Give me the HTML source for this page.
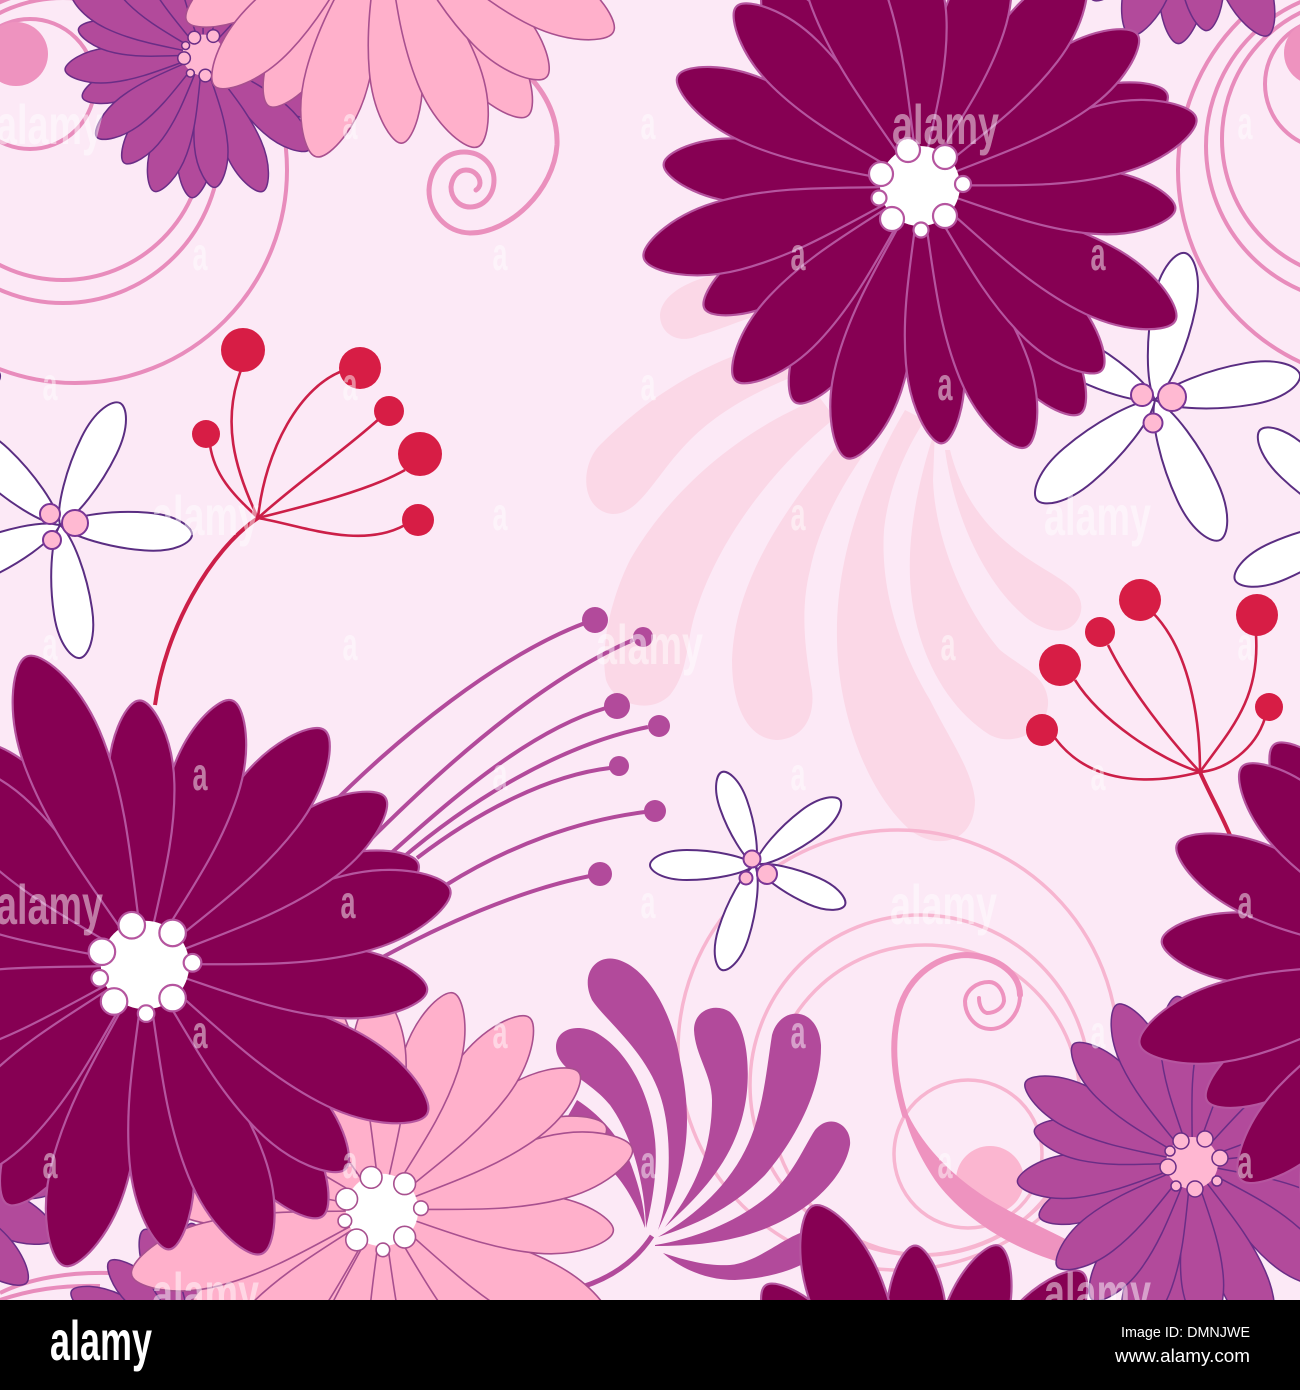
<!DOCTYPE html>
<html>
<head>
<meta charset="utf-8">
<style>
html,body{margin:0;padding:0;background:#000;width:1300px;height:1390px;overflow:hidden}
svg{display:block}
.wm{font-family:"Liberation Sans Narrow","Liberation Sans",sans-serif;font-weight:700;fill:#fff;fill-opacity:.48}
.ft{font-family:"Liberation Sans Narrow","Liberation Sans",sans-serif;fill:#fff}
</style>
</head>
<body>
<svg xmlns="http://www.w3.org/2000/svg" width="1300" height="1390" viewBox="0 0 1300 1390">
<defs>
<path id="p" vector-effect="non-scaling-stroke" d="M0 0C.25-.42 .45-1 .68-1C.86-1 .98-.42 .995-.1Q1 0 .995 .1C.98 .42 .86 1 .68 1C.45 1 .25 .42 0 0Z"/>
<path id="s" vector-effect="non-scaling-stroke" d="M0 0C.1-.6 .4-1 .65-1C.88-1 1-.4 1 0C1 .4 .88 1 .65 1C.4 1 .1 .6 0 0Z"/>
<g id="big">
<use href="#p" transform="matrix(248 -92 11.5 31 0 0)"/>
<use href="#p" transform="matrix(-125 217 -27.1 -15.6 0 0)"/>
<use href="#p" transform="matrix(161 228 -28.5 20.1 0 0)"/>
<use href="#p" transform="matrix(-155 -200 25 -19.4 0 0)"/>
<use href="#p" transform="matrix(-216 123 -15.4 -27 0 0)"/>
<use href="#p" transform="matrix(-257 -22 2.75 -32 0 0)"/>
<use href="#p" transform="matrix(-277 72 -9 -34.6 0 0)"/>
<use href="#p" transform="matrix(-243 -110 13.75 -30 0 0)"/>
<use href="#p" transform="matrix(-184 -180 22.5 -23 0 0)"/>
<use href="#p" transform="matrix(-185 195 -24.4 -23 0 0)"/>
<use href="#p" transform="matrix(-73 273 -34 -9 0 0)"/>
<use href="#p" transform="matrix(22 258 -29 2.5 0 0)"/>
<use href="#p" transform="matrix(106 262 -32.75 13.25 0 0)"/>
<use href="#p" transform="matrix(182 185 -23 22.75 0 0)"/>
<use href="#p" transform="matrix(256 135 -16.9 32 0 0)"/>
<use href="#p" transform="matrix(256 23 -2.9 32 0 0)"/>
<use href="#p" transform="matrix(277 -68 8.5 34.6 0 0)"/>
<use href="#p" transform="matrix(218 -152 19 27 0 0)"/>
<use href="#p" transform="matrix(163 -213 26.6 20.4 0 0)"/>
<use href="#p" transform="matrix(79 -240 30 9.9 0 0)"/>
<use href="#p" transform="matrix(-5 -240 30 -.6 0 0)"/>
<use href="#p" transform="matrix(-107 -280 35 -13.4 0 0)"/>
</g>
<g id="bigc" fill="#fff">
<circle vector-effect="non-scaling-stroke" r="40" stroke="none"/>
<circle vector-effect="non-scaling-stroke" cx="-12" cy="-36" r="12"/>
<circle vector-effect="non-scaling-stroke" cx="25" cy="-29" r="12"/>
<circle vector-effect="non-scaling-stroke" cx="43" cy="-2" r="8"/>
<circle vector-effect="non-scaling-stroke" cx="25" cy="30" r="12"/>
<circle vector-effect="non-scaling-stroke" cx="1" cy="44" r="7.5"/>
<circle vector-effect="non-scaling-stroke" cx="-28" cy="33" r="12"/>
<circle vector-effect="non-scaling-stroke" cx="-41" cy="12" r="7.5"/>
<circle vector-effect="non-scaling-stroke" cx="-39" cy="-12" r="12"/>
</g>
<g id="pur">
<use href="#p" transform="matrix(-153 54 -6.75 -19 0 0)"/>
<use href="#p" transform="matrix(-14 181 -22.6 -1.75 0 0)"/>
<use href="#p" transform="matrix(170 -40 5 21 0 0)"/>
<use href="#p" transform="matrix(-175 19 -2.4 -21.9 0 0)"/>
<use href="#p" transform="matrix(-158 -33 4.1 -19.75 0 0)"/>
<use href="#p" transform="matrix(-167 -81 10.1 -20.9 0 0)"/>
<use href="#p" transform="matrix(-119 -119 14.9 -14.9 0 0)"/>
<use href="#p" transform="matrix(-75 -159 19.9 -9.4 0 0)"/>
<use href="#p" transform="matrix(-15 -167 20.9 -1.9 0 0)"/>
<use href="#p" transform="matrix(40 -170 21.25 5 0 0)"/>
<use href="#p" transform="matrix(100 -150 18.75 12.5 0 0)"/>
<use href="#p" transform="matrix(150 -100 12.5 18.75 0 0)"/>
<use href="#p" transform="matrix(175 20 -2.5 21.9 0 0)"/>
<use href="#p" transform="matrix(165 75 -9.4 20.6 0 0)"/>
<use href="#p" transform="matrix(135 120 -15 16.9 0 0)"/>
<use href="#p" transform="matrix(76 173 -21.6 9.5 0 0)"/>
<use href="#p" transform="matrix(15 168 -21 1.9 0 0)"/>
<use href="#p" transform="matrix(-62 173 -21.6 -7.75 0 0)"/>
<use href="#p" transform="matrix(-100 137 -17 -12.5 0 0)"/>
<use href="#p" transform="matrix(-135 104 -13 -16.9 0 0)"/>
<g fill="#ffb7d2">
<circle vector-effect="non-scaling-stroke" r="26" stroke="none"/>
<circle vector-effect="non-scaling-stroke" cx="-11" cy="-22" r="8"/>
<circle vector-effect="non-scaling-stroke" cx="13" cy="-24" r="8"/>
<circle vector-effect="non-scaling-stroke" cx="28" cy="-5" r="8"/>
<circle vector-effect="non-scaling-stroke" cx="25" cy="18" r="5"/>
<circle vector-effect="non-scaling-stroke" cx="3" cy="26" r="8"/>
<circle vector-effect="non-scaling-stroke" cx="-16" cy="23" r="5"/>
<circle vector-effect="non-scaling-stroke" cx="-24" cy="4" r="8"/>
<circle vector-effect="non-scaling-stroke" cx="-22" cy="-12" r="5"/>
</g>
</g>
<g id="starG">
<use href="#s" transform="matrix(-120 -65 9.3 -17.1 1155 400)"/>
<use href="#s" transform="matrix(30 -147 21 4.3 1155 400)"/>
<use href="#s" transform="matrix(145 -25 3.6 20.7 1155 400)"/>
<use href="#s" transform="matrix(65 140 -20 9.3 1155 400)"/>
<use href="#s" transform="matrix(-118 100 -14.3 -16.9 1155 400)"/>
<g fill="#ffb9d2" stroke="#7a3596">
<circle cx="1142" cy="395" r="11"/><circle cx="1172" cy="397" r="14"/><circle cx="1153" cy="423" r="9.5"/>
</g>
</g>
<g id="starH">
<use href="#s" transform="matrix(60 -122 17.4 8.6 60 525)"/>
<use href="#s" transform="matrix(132 10 -1.4 18.9 60 525)"/>
<use href="#s" transform="matrix(20 133 -19 2.9 60 525)"/>
<use href="#s" transform="matrix(-125 55 -7.9 -17.9 60 525)"/>
<use href="#s" transform="matrix(-100 -95 13.6 -14.3 60 525)"/>
<g fill="#ffb9d2" stroke="#7a3596">
<circle cx="50" cy="514" r="10"/><circle cx="75" cy="523" r="13"/><circle cx="52" cy="540" r="9"/>
</g>
</g>
</defs>

<rect width="1300" height="1300" fill="#fce9f6"/>

<!-- pale plumes -->
<g fill="#fbd8e7">
<path d="M730 272C700 276 662 290 660 315C660 335 680 345 700 335C720 330 745 318 770 312Z"/>
<path d="M750 350C690 370 640 405 600 445C580 465 580 510 612 514C640 515 655 475 690 440C725 405 770 385 815 368Z"/>
<path d="M820 398C740 430 670 490 630 560C610 600 600 650 606 680C615 705 650 715 670 695C690 670 685 640 698 605C720 540 770 470 835 418Z"/>
<path d="M850 430C800 490 735 570 732 660C732 710 750 740 778 740C805 738 815 715 812 690C805 650 800 610 810 570C820 520 850 470 885 425Z"/>
<path d="M905 410C870 470 835 550 837 640C838 710 865 790 910 830C935 850 975 845 975 800C972 770 950 740 930 700C900 650 880 590 884 530C888 490 905 450 925 420Z"/>
<path d="M935 430C915 490 905 550 912 600C920 660 950 710 990 735C1015 748 1050 730 1048 700C1045 675 1025 670 1000 650C965 610 935 540 933 480Z"/>
<path d="M945 450C955 520 985 580 1020 612C1040 632 1070 640 1080 615C1088 590 1060 580 1030 560C1000 540 965 510 950 450Z"/>
</g>

<!-- light rings bottom right -->
<g fill="none" stroke="#f7b5d0" stroke-width="3.5">
<circle cx="898" cy="1050" r="220"/>
<circle cx="920" cy="1085" r="170"/>
<circle cx="925" cy="1100" r="155"/>
<circle cx="968" cy="1154" r="74"/>
</g>
<circle cx="990" cy="1180" r="34" fill="#fbb6d0"/>

<!-- darker swirl bottom -->
<g fill="none" stroke="#ee93bf" stroke-linecap="round">
<path stroke-width="6" d="M905 1115C893 1075 892 1045 897 1020C903 980 935 955 967 955C1000 957 1020 975 1020 995"/>
<path stroke-width="4" d="M1020 995C1020 1015 1005 1029 991 1029C975 1029 965 1015 965 1001C966 990 977 982 989 982C998 982 1004 992 1004 1001C1003 1008 995 1013 987 1013C982 1012 979 1005 979 998"/>
</g>
<path fill="#ee93bf" d="M900 1095C915 1140 950 1175 990 1200C1020 1218 1060 1235 1110 1262L1070 1265C1010 1250 960 1215 935 1180C915 1150 905 1125 900 1095Z"/>

<!-- rings top -->
<g fill="none" stroke="#e88cbc" stroke-width="4">
<ellipse cx="75" cy="170" rx="212" ry="213"/>
<circle cx="63" cy="146" r="157"/>
<circle cx="63" cy="139" r="141"/>
<circle cx="30" cy="84" r="65"/>
<circle cx="1390" cy="170" r="212"/>
<circle cx="1363" cy="146" r="157"/>
<circle cx="1363" cy="139" r="141"/>
<circle cx="1330" cy="84" r="65"/>
<path d="M0 1293C30 1278 70 1272 110 1273M0 1300C30 1290 60 1285 100 1286"/>
</g>
<circle cx="16" cy="54" r="32" fill="#ee93bf"/>
<circle cx="1316" cy="53" r="32" fill="#ee93bf"/>

<!-- swirl top -->
<path fill="none" stroke="#ea90bd" stroke-width="5" stroke-linecap="round" d="M526 73C548 95 558 120 557 145C554 190 510 233 470 233C445 232 429 212 429 190C430 168 445 152 464 152C482 152 494 165 494 180C494 196 483 207 470 207C459 207 451 198 451 187C452 177 458 170 466 170C474 170 480 176 480 183C480 186 478 189 476 190"/>

<!-- magenta fan -->
<g fill="#b24a9b">
<path d="M560 1130L577 1100C605 1118 625 1145 633 1170C640 1190 645 1210 645 1228C635 1200 620 1175 600 1160Z"/>
<path d="M658 1230C672 1190 672 1130 660 1095C645 1050 605 1020 592 1000C580 975 595 955 615 959C645 965 672 1010 680 1060C695 1130 685 1175 658 1230Z"/>
<path d="M646 1228C645 1190 635 1140 610 1105C590 1080 556 1070 556 1047C556 1030 575 1023 595 1032C625 1048 650 1090 655 1140C658 1170 652 1205 646 1228Z"/>
<path d="M665 1227C695 1190 712 1150 712 1100C712 1075 695 1055 694 1030C694 1010 715 1002 730 1012C750 1030 750 1080 745 1105C735 1160 700 1195 665 1227Z"/>
<path d="M658 1237C705 1210 745 1170 758 1115C765 1090 768 1060 772 1035C780 1005 818 1005 821 1045C822 1090 795 1140 765 1175C730 1210 695 1225 658 1237Z"/>
<path d="M655 1245C700 1238 745 1218 775 1190C795 1170 805 1145 815 1130C830 1112 852 1125 850 1145C845 1175 815 1205 780 1222C740 1242 695 1246 655 1246Z"/>
<path d="M663 1253C690 1262 710 1266 730 1265C760 1262 785 1235 810 1230L825 1250C800 1270 770 1278 735 1280C705 1280 680 1268 663 1253Z"/>
</g>
<path fill="none" stroke="#b24a9b" stroke-width="5" d="M652 1236C635 1262 610 1278 582 1287"/>

<!-- red sprigs -->
<g fill="none" stroke="#cc1f48" stroke-width="2.6">
<path stroke-width="4" d="M155 705C165 630 210 550 258 518"/>
<path d="M258 518C235 470 220 420 243 365"/>
<path d="M258 518C240 500 215 480 210 445"/>
<path d="M258 518C265 450 300 385 345 370"/>
<path d="M258 518C300 480 345 450 380 418"/>
<path d="M258 518C310 505 370 490 405 470"/>
<path d="M258 518C300 525 360 550 405 525"/>
<path stroke-width="4" d="M1232 840C1222 815 1210 795 1200 772"/>
<path d="M1200 772C1150 785 1090 785 1055 738"/>
<path d="M1200 772C1160 760 1100 720 1075 680"/>
<path d="M1200 772C1170 740 1130 690 1108 645"/>
<path d="M1200 772C1200 720 1190 650 1152 612"/>
<path d="M1200 772C1230 730 1260 700 1256 635"/>
<path d="M1200 772C1225 770 1255 750 1265 718"/>
<path stroke-width="4" d="M1247 900V985"/>
</g>
<g fill="#d71d45">
<circle cx="243" cy="350" r="22"/><circle cx="360" cy="368" r="21"/><circle cx="389" cy="411" r="15"/>
<circle cx="420" cy="454" r="22"/><circle cx="418" cy="520" r="16"/><circle cx="206" cy="434" r="14"/>
<circle cx="1060" cy="665" r="21"/><circle cx="1100" cy="632" r="15"/><circle cx="1140" cy="600" r="21"/>
<circle cx="1257" cy="615" r="21"/><circle cx="1269" cy="707" r="14"/><circle cx="1042" cy="730" r="16"/>
</g>

<!-- magenta stems -->
<g fill="none" stroke="#b24a9b" stroke-width="4">
<path d="M324 812C400 735 500 655 585 623"/>
<path d="M370 840C440 770 540 680 633 640"/>
<path d="M389 855C450 800 530 730 606 708"/>
<path d="M400 860C470 800 560 745 648 727"/>
<path d="M417 858C480 810 550 775 610 768"/>
<path d="M446 885C510 845 580 820 645 812"/>
<path d="M372 963C440 925 520 890 590 876"/>
</g>
<g fill="#b24a9b">
<circle cx="595" cy="620" r="13"/><circle cx="643" cy="637" r="10"/><circle cx="617" cy="706" r="13"/>
<circle cx="659" cy="726" r="11"/><circle cx="619" cy="766" r="10"/><circle cx="655" cy="811" r="11"/><circle cx="600" cy="874" r="12"/>
</g>

<!-- stars -->
<g fill="#fff" stroke="#5a2d82" stroke-width="2">
<use href="#starG"/>
<use href="#starG" transform="translate(-1300 0)"/>
<use href="#starH"/>
<use href="#starH" transform="translate(1300 0)"/>
<use href="#s" transform="matrix(-33 -93 13.3 -4.7 755 865)"/>
<use href="#s" transform="matrix(85 -65 9.3 12.1 755 865)"/>
<use href="#s" transform="matrix(90 40 -5.7 12.9 755 865)"/>
<use href="#s" transform="matrix(-33 105 -15 -4.7 755 865)"/>
<use href="#s" transform="matrix(-105 0 0 -15 755 865)"/>
<g fill="#ffb9d2" stroke="#7a3596">
<circle cx="752" cy="859" r="8.5"/><circle cx="767" cy="874" r="10"/><circle cx="746" cy="878" r="6.5"/>
</g>
</g>

<!-- dark flower bottom (tile) -->
<g fill="#860053" stroke="#b5559f" stroke-width="2.2">
<use href="#big" transform="translate(920 1485)"/>
</g>

<!-- purple flowers -->
<g fill="#b24a9b" stroke="#6a2d86" stroke-width="1.5">
<use href="#pur" transform="translate(1192 1163)"/>
<use href="#pur" transform="translate(1192 -137)"/>
<use href="#pur" transform="translate(-108 1163)"/>
<use href="#pur" transform="translate(203 55) scale(.79)"/>
<use href="#pur" transform="translate(203 1355) scale(.79)"/>
</g>

<!-- pink flowers -->
<g fill="#ffb0cb" stroke="#a8508f" stroke-width="1.6">
<use href="#big" transform="translate(382 1210) scale(.906)"/>
<use href="#bigc" transform="translate(382 1210) scale(.906)"/>
<use href="#big" transform="translate(382 -90) scale(.906)"/>
</g>

<!-- big dark flowers -->
<g fill="#860053" stroke="#b5559f" stroke-width="2.2">
<use href="#big" transform="translate(920 186)"/>
<use href="#bigc" transform="translate(920 186)"/>
<use href="#big" transform="translate(145 965) scale(1.105)"/>
<use href="#bigc" transform="translate(145 965) scale(1.105)"/>
<use href="#big" transform="translate(1445 965) scale(1.105)"/>
</g>

<!-- watermarks -->
<g class="wm" font-size="56">
<text x="892" y="144" textLength="107" lengthAdjust="spacingAndGlyphs">alamy</text>
<text x="-4" y="144" textLength="107" lengthAdjust="spacingAndGlyphs">alamy</text>
<text x="152" y="535" textLength="107" lengthAdjust="spacingAndGlyphs">alamy</text>
<text x="1044" y="535" textLength="107" lengthAdjust="spacingAndGlyphs">alamy</text>
<text x="596" y="664" textLength="107" lengthAdjust="spacingAndGlyphs">alamy</text>
<text x="-4" y="924" textLength="107" lengthAdjust="spacingAndGlyphs">alamy</text>
<text x="890" y="924" textLength="107" lengthAdjust="spacingAndGlyphs">alamy</text>
<text x="152" y="1312" textLength="107" lengthAdjust="spacingAndGlyphs">alamy</text>
<text x="1044" y="1312" textLength="107" lengthAdjust="spacingAndGlyphs">alamy</text>
</g>
<g class="wm" font-size="46" text-anchor="middle">
<text x="350" y="139" textLength="15" lengthAdjust="spacingAndGlyphs">a</text><text x="648" y="139" textLength="15" lengthAdjust="spacingAndGlyphs">a</text><text x="1245" y="139" textLength="15" lengthAdjust="spacingAndGlyphs">a</text>
<text x="200" y="270" textLength="15" lengthAdjust="spacingAndGlyphs">a</text><text x="500" y="270" textLength="15" lengthAdjust="spacingAndGlyphs">a</text><text x="798" y="270" textLength="15" lengthAdjust="spacingAndGlyphs">a</text><text x="1098" y="270" textLength="15" lengthAdjust="spacingAndGlyphs">a</text>
<text x="50" y="400" textLength="15" lengthAdjust="spacingAndGlyphs">a</text><text x="350" y="400" textLength="15" lengthAdjust="spacingAndGlyphs">a</text><text x="648" y="400" textLength="15" lengthAdjust="spacingAndGlyphs">a</text><text x="945" y="400" textLength="15" lengthAdjust="spacingAndGlyphs">a</text>
<text x="500" y="530" textLength="15" lengthAdjust="spacingAndGlyphs">a</text><text x="798" y="530" textLength="15" lengthAdjust="spacingAndGlyphs">a</text>
<text x="50" y="660" textLength="15" lengthAdjust="spacingAndGlyphs">a</text><text x="350" y="660" textLength="15" lengthAdjust="spacingAndGlyphs">a</text><text x="948" y="660" textLength="15" lengthAdjust="spacingAndGlyphs">a</text><text x="1245" y="660" textLength="15" lengthAdjust="spacingAndGlyphs">a</text>
<text x="200" y="790" textLength="15" lengthAdjust="spacingAndGlyphs">a</text><text x="500" y="790" textLength="15" lengthAdjust="spacingAndGlyphs">a</text><text x="798" y="790" textLength="15" lengthAdjust="spacingAndGlyphs">a</text><text x="1098" y="790" textLength="15" lengthAdjust="spacingAndGlyphs">a</text>
<text x="348" y="918" textLength="15" lengthAdjust="spacingAndGlyphs">a</text><text x="648" y="918" textLength="15" lengthAdjust="spacingAndGlyphs">a</text><text x="1245" y="918" textLength="15" lengthAdjust="spacingAndGlyphs">a</text>
<text x="200" y="1048" textLength="15" lengthAdjust="spacingAndGlyphs">a</text><text x="500" y="1048" textLength="15" lengthAdjust="spacingAndGlyphs">a</text><text x="798" y="1048" textLength="15" lengthAdjust="spacingAndGlyphs">a</text><text x="1098" y="1048" textLength="15" lengthAdjust="spacingAndGlyphs">a</text>
<text x="50" y="1178" textLength="15" lengthAdjust="spacingAndGlyphs">a</text><text x="350" y="1178" textLength="15" lengthAdjust="spacingAndGlyphs">a</text><text x="648" y="1178" textLength="15" lengthAdjust="spacingAndGlyphs">a</text><text x="945" y="1178" textLength="15" lengthAdjust="spacingAndGlyphs">a</text><text x="1245" y="1178" textLength="15" lengthAdjust="spacingAndGlyphs">a</text>
</g>

<!-- footer -->
<rect y="1300" width="1300" height="90" fill="#000"/>
<text class="ft" x="50" y="1360" font-size="56" font-weight="700" textLength="102" lengthAdjust="spacingAndGlyphs">alamy</text>
<text class="ft" x="1121" y="1337" font-size="15" textLength="129" lengthAdjust="spacingAndGlyphs">Image ID: DMNJWE</text>
<text class="ft" x="1115" y="1362" font-size="18" textLength="135" lengthAdjust="spacingAndGlyphs">www.alamy.com</text>
</svg>
</body>
</html>
